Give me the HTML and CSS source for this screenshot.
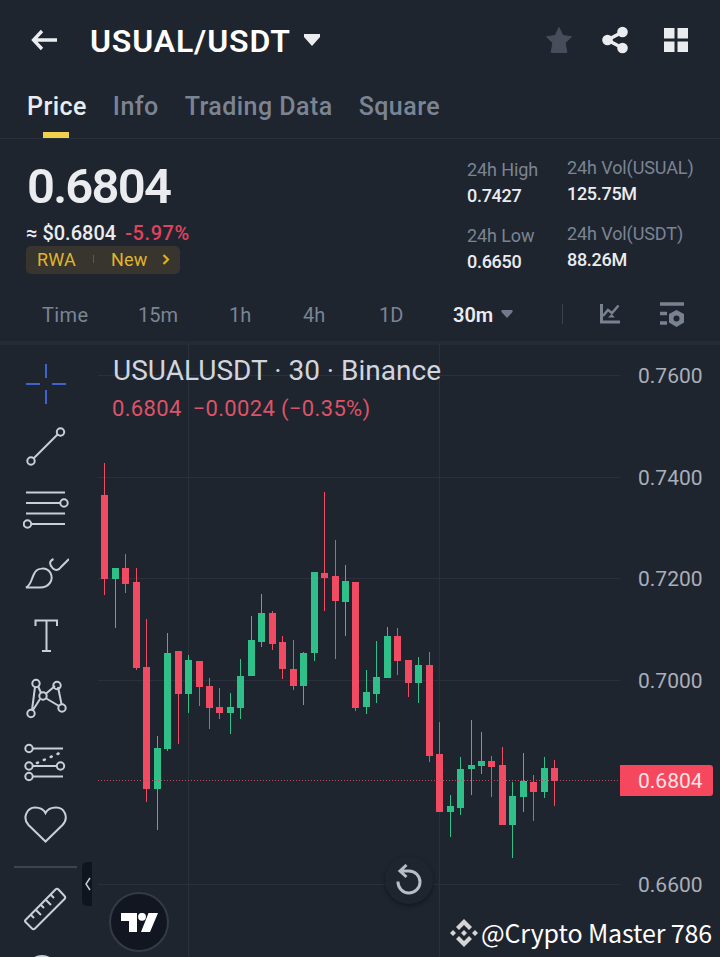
FILE: index.html
```html
<!DOCTYPE html>
<html lang="en">
<head>
    <meta charset="UTF-8">
    <meta name="viewport" content="width=device-width, initial-scale=1.0">
    <title>USUAL/USDT</title>
    <link rel="stylesheet" href="styles.css">
</head>
<body>
    <header class="topbar">
        <svg class="back" width="28" height="22" viewBox="0 0 28 22"><path d="M12 2L3.500 11L12 20M3.500 11H27" fill="none" stroke="#eaecef" stroke-width="3.300"/></svg>
        <h1>USUAL/USDT</h1>
        <svg class="caret" width="18" height="14" viewBox="0 0 18 14"><path d="M1 1H17V4L9 13L1 4Z" fill="#eaecef"/></svg>
        <div class="actions">
            <svg width="28" height="28" viewBox="0 0 28 28"><path d="M14 1.500L17.800 9.600L26.500 10.700L20.200 17L21.800 26.500H6.200L7.800 17L1.500 10.700L10.200 9.600Z" fill="#474d5b" stroke="#474d5b" stroke-linejoin="round"/></svg>
            <svg width="28" height="28" viewBox="0 0 28 28"><path d="M21.500 6L6.500 14L21.500 22" fill="none" stroke="#eaecef" stroke-width="3.500"/><circle cx="21.500" cy="6" r="5.300" fill="#eaecef"/><circle cx="6.500" cy="14" r="5.300" fill="#eaecef"/><circle cx="21.500" cy="22" r="5.300" fill="#eaecef"/></svg>
            <svg width="28" height="28" viewBox="0 0 28 28"><path d="M2 2H12.500V12.500H2ZM15.500 2H26V12.500H15.500ZM2 15.500H12.500V26H2ZM15.500 15.500H26V26H15.500Z" fill="#eaecef"/></svg>
        </div>
    </header>

    <nav class="tabs">
        <a class="tab active">Price</a>
        <a class="tab">Info</a>
        <a class="tab">Trading Data</a>
        <a class="tab">Square</a>
    </nav>

    <section class="summary">
        <div class="quote">
            <div class="price">0.6804</div>
            <div class="fiat">≈ $0.6804 <span class="change">-5.97%</span></div>
            <div class="tags">
                <span>RWA</span>
                <i class="tag-line"></i>
                <span>New</span>
                <svg width="8" height="11" viewBox="0 0 8 11"><path d="M1.500 1L6 5.500L1.500 10" fill="none" stroke="#e0af1f" stroke-width="2.200"/></svg>
            </div>
        </div>
        <dl class="stats stats-left">
            <dt>24h High</dt>
            <dd>0.7427</dd>
            <dt>24h Low</dt>
            <dd>0.6650</dd>
        </dl>
        <dl class="stats stats-right">
            <dt>24h Vol(USUAL)</dt>
            <dd>125.75M</dd>
            <dt>24h Vol(USDT)</dt>
            <dd>88.26M</dd>
        </dl>
    </section>

    <nav class="intervals">
        <span class="int-time">Time</span>
        <span class="int-15">15m</span>
        <span class="int-1h">1h</span>
        <span class="int-4h">4h</span>
        <span class="int-1d">1D</span>
        <span class="selected">30m</span>
        <svg width="12" height="10" viewBox="0 0 12 10"><path d="M.5 1H11.500V3L6 9L.5 3Z" fill="#707a8a"/></svg>
        <i class="int-line"></i>
        <svg class="int-chart" width="20" height="20" viewBox="0 0 20 20"><path d="M1.500 0V18H20" fill="none" stroke="#788290" stroke-width="3"/><path d="M3 12L8 6L12 9L18.500 1.500" fill="none" stroke="#788290" stroke-width="2.500"/><path d="M8 13.500L11.500 10L15 13.500Z" fill="#788290"/></svg>
        <svg class="int-settings" width="26" height="26" viewBox="0 0 26 26"><path d="M1 3H25M1 12.500H8M1 22H8" stroke="#788290" stroke-width="3.600"/><path fill-rule="evenodd" d="M17.500 9L25 13V21.500L17.500 26L10 21.500V13ZM17.500 14.500A3 3 0 1 0 17.500 20.500A3 3 0 1 0 17.500 14.500Z" fill="#788290"/></svg>
    </nav>

    <main class="chart">
        <aside class="tools">
            <svg class="cross" viewBox="0 0 46 63"><path d="M23 12V26M23 38V52M3 32H17M29 32H43"/></svg>
            <svg viewBox="0 0 46 63"><path d="M10.500 43.500L34.500 19.500"/><circle cx="8" cy="46" r="3.700"/><circle cx="37.500" cy="17" r="3.700"/></svg>
            <svg viewBox="0 0 46 63"><path d="M3 14.500H42M3 25H37M3 35.500H42M8 46H42"/><circle cx="41" cy="25" r="3.700"/><circle cx="4.500" cy="46" r="3.700"/></svg>
            <svg viewBox="0 0 46 63"><path d="M3 46.500C8 44 8 39 11 33C14 26 24 26 27.500 32C31 39 26 46.500 17 46.500Z"/><path d="M30.500 18C26 20 26 24 30 27.500C33 30 36 29 38 26L46 18"/></svg>
            <svg viewBox="0 0 46 63"><path d="M12.500 22V16.500H34V22M23.500 16.500V47M19 47H28"/></svg>
            <svg viewBox="0 0 46 63"><path d="M12 20L9 43M15 19L18 26M22.500 27L32 19M35 20L38.500 37M22.500 31L36 39M17 32L10 43"/><circle cx="13" cy="16.500" r="3.700"/><circle cx="34" cy="18.500" r="3.700"/><circle cx="20" cy="29" r="3.700"/><circle cx="39" cy="41" r="3.700"/><circle cx="8" cy="46.500" r="3.700"/></svg>
            <svg viewBox="0 0 46 63"><path d="M10 18.500H40M10 36H34M10 46.500H40"/><path class="dots" d="M14 33L39 22"/><circle cx="6" cy="18.500" r="3.700"/><circle cx="6" cy="36" r="3.700"/><circle cx="37.500" cy="36" r="3.700"/><circle cx="6" cy="46.500" r="3.700"/></svg>
            <svg viewBox="0 0 46 63"><path d="M22.500 48.500L5.500 32C-1 25 4 14.500 12 14.500C17 14.500 21 17 22.500 20C24 17 28 14.500 33 14.500C42 14.500 46 25 39.500 32Z"/></svg>
            <i class="tools-line"></i>
            <svg class="ruler" viewBox="0 0 46 46"><path d="M3.500 34L33.500 3.500Q35 2 36.500 3.500L42.500 10Q44 11.500 42.500 13L13 42.500Q11.500 44 10 42.500L3.500 36Q2.500 35 3.500 34ZM9 29L12 32M14 24L19 29M19 19L22 22M24 14L29 19M29 9L32 12"/></svg>
            <svg class="zoom-tool" viewBox="0 0 46 46"><circle cx="20" cy="17" r="15"/></svg>
        </aside>
        <div class="plot">
            <svg width="622" height="614" viewBox="98 343 622 614">
                <g class="grid">
                    <path d="M98 375.500H620M98 477.500H620M98 578.500H620M98 680.500H620M98 884.500H620M188.500 343V957M439.500 343V957"/>
                </g>
                <g id="series"></g>
                <path class="last-line" d="M98 780.500H620"/>
                <g class="scale">
                    <text x="638" y="383">0.7600</text>
                    <text x="638" y="485">0.7400</text>
                    <text x="638" y="586">0.7200</text>
                    <text x="638" y="688">0.7000</text>
                    <text x="638" y="892">0.6600</text>
                    <path class="last-box" d="M620 765H710Q713 765 713 768V793Q713 796 710 796H620Z"/>
                    <text class="last" x="638" y="788">0.6804</text>
                </g>
            </svg>
            <div class="legend">
                <div class="legend-title">USUALUSDT · 30 · Binance</div>
                <div class="legend-values">0.6804 <span>−0.0024 (−0.35%)</span></div>
            </div>
            <div class="collapse"><svg width="8" height="14" viewBox="0 0 8 14"><path d="M7 1L3 7L7 13" fill="none" stroke="#c5cbd8" stroke-width="1.500"/></svg></div>
            <div class="tv-logo"><svg width="38" height="20" viewBox="0 0 38 20"><path d="M0 0H16V19H8V8H0ZM27.500 0H37L29 19H20Z" fill="#fff"/><circle cx="21" cy="3.800" r="3.900" fill="#fff"/></svg></div>
            <div class="reset"><svg width="28" height="32" viewBox="0 0 28 32"><path d="M3 17.500A11 11 0 1 0 14 7H5M11.500 1L5 7L11.500 13" fill="none" stroke="#b8bdc9" stroke-width="3"/></svg></div>
            <div class="watermark">
                <svg width="28" height="28" viewBox="0 0 28 28"><path d="M14 0L22 8L19 11L14 6L9 11L6 8ZM3 11L6 14L3 17L0 14ZM25 11L28 14L25 17L22 14ZM14 11L17 14L14 17L11 14ZM9 17L14 22L19 17L22 20L14 28L6 20Z" fill="#d5d5d5"/></svg>
                <span>@Crypto Master 786</span>
            </div>
        </div>
    </main>
    <script src="chart.js"></script>
</body>
</html>
```
FILE: styles.css
```css
body {
    margin: 0;
    width: 720px;
    height: 957px;
    overflow: hidden;
    background-color: #1f252f;
    color: #eaecef;
    font-family: Roboto, "Liberation Sans", sans-serif;
}
svg {
    display: block;
    flex: none;
}
.topbar {
    display: flex;
    align-items: center;
    height: 80px;
    padding: 0 30px;
}
h1 {
    margin: 2px 0 0 32px;
    width: 199px;
    font-size: 32px;
    font-weight: 600;
    letter-spacing: 0.85px;
    white-space: nowrap;
    color: #fff;
}
.caret {
    margin-left: 14px;
}
.actions {
    display: flex;
    gap: 30px;
    margin-left: auto;
}
.actions svg:nth-child(2) {
    margin-left: -2px;
    margin-right: 3px;
}
.tabs {
    display: flex;
    box-sizing: border-box;
    height: 59px;
    padding-left: 27px;
    border-bottom: 1px solid #2b313b;
}
.tab {
    position: relative;
    margin-right: 26px;
    padding-top: 11px;
    font-size: 25px;
    line-height: 31px;
    font-weight: 500;
    letter-spacing: 0.45px;
    white-space: nowrap;
    color: #7b8493;
}
.active {
    color: #eaecef;
}
.active::after {
    content: "";
    position: absolute;
    left: 16px;
    bottom: 0;
    width: 26px;
    height: 6px;
    background-color: #f0d04c;
}
.summary {
    display: flex;
    height: 147px;
}
.quote {
    flex: none;
    box-sizing: border-box;
    width: 467px;
    padding-left: 27px;
}
.price {
    margin-top: 20px;
    height: 56px;
    line-height: 56px;
    font-size: 49px;
    font-weight: 600;
    letter-spacing: -1.8px;
}
.fiat {
    margin: 6px 0 1px -1px;
    height: 24px;
    line-height: 24px;
    font-size: 20px;
    font-weight: 500;
}
.change {
    margin-left: 4px;
    letter-spacing: 0.6px;
    color: #e0435d;
}
.tags {
    display: flex;
    align-items: center;
    box-sizing: border-box;
    width: 154px;
    height: 28px;
    margin-left: -1px;
    padding: 0 10px 2px 11px;
    border-radius: 5px;
    background-color: #37352d;
    font-size: 18px;
    letter-spacing: 0.2px;
    color: #e0b42e;
}
.tag-line {
    width: 1px;
    height: 8px;
    margin: 0 17px;
    background-color: #6b5a2a;
}
.tags svg {
    margin-left: auto;
}
.stats {
    margin: 0;
    font-size: 18px;
    letter-spacing: -0.1px;
}
.stats-left {
    width: 100px;
    padding-top: 18px;
}
.stats-right {
    padding-top: 16px;
}
.stats dt {
    height: 26px;
    line-height: 26px;
    white-space: nowrap;
    color: #7b8493;
}
.stats dd {
    height: 26px;
    line-height: 26px;
    margin: 0 0 14px;
    font-weight: 500;
    letter-spacing: -0.3px;
}
.intervals {
    display: flex;
    align-items: center;
    box-sizing: border-box;
    height: 59px;
    padding-left: 42px;
    border-bottom: 4px solid #252b35;
    font-size: 20px;
    color: #7b8493;
}
.intervals span {
    flex: none;
    padding-top: 3px;
}
.int-time {
    width: 96px;
    letter-spacing: 0.4px;
}
.int-15 {
    width: 91px;
}
.int-1h {
    width: 74px;
}
.int-4h {
    width: 76px;
}
.int-1d {
    width: 74px;
}
.selected {
    width: 48px;
    font-weight: 600;
    color: #eaecef;
}
.int-line {
    width: 1px;
    height: 20px;
    margin-left: 49px;
    background-color: #3a414d;
}
.int-chart {
    margin-left: 37px;
}
.int-settings {
    margin-left: 39px;
}
.chart {
    display: flex;
    height: 612px;
}
.tools {
    display: flex;
    flex-direction: column;
    width: 98px;
}
.tools svg {
    width: 46px;
    height: 63px;
    margin-left: 23px;
    fill: none;
    stroke: #c9cfda;
    stroke-width: 2;
}
.tools .cross {
    margin-top: 7px;
    stroke: #3f63c8;
}
.tools .dots {
    stroke-width: 2.6;
    stroke-linecap: round;
    stroke-dasharray: 1 6.500;
}
.tools-line {
    flex: none;
    width: 63px;
    height: 2px;
    margin: 10px 0 18px 14px;
    background-color: #3e444f;
}
.tools .ruler,
.tools .zoom-tool {
    height: 46px;
    margin-left: 22px;
}
.tools .zoom-tool {
    margin-top: 22px;
}
.plot {
    position: relative;
    margin-top: -2px;
}
.grid path {
    fill: none;
    stroke: #2a313b;
}
.last-line {
    stroke: #c04a60;
    stroke-dasharray: 1 2;
}
.up {
    fill: #2fbf89;
}
.down {
    fill: #f04b63;
}
.scale text {
    font-size: 21px;
    fill: #a9afba;
}
.scale .last-box {
    fill: #f5475d;
}
.scale .last {
    fill: #fce3e6;
}
.legend {
    position: absolute;
    left: 15px;
    top: 10px;
    white-space: nowrap;
}
.legend-title {
    font-size: 28px;
    line-height: 36px;
    color: #d1d5de;
}
.legend-values {
    margin: 6px 0 0 -1px;
    font-size: 22px;
    line-height: 28px;
    letter-spacing: 0.35px;
    color: #dc5368;
}
.legend-values span {
    margin-left: 5px;
}
.collapse {
    position: absolute;
    left: -16px;
    top: 519px;
    display: flex;
    align-items: center;
    justify-content: center;
    width: 10px;
    height: 44px;
    border-radius: 5px 0 0 5px;
    background-color: #10141e;
}
.tv-logo {
    position: absolute;
    left: 11px;
    top: 549px;
    display: flex;
    align-items: center;
    justify-content: center;
    width: 56px;
    height: 56px;
    border: 2px solid #343a46;
    border-radius: 50%;
    background-color: #121621;
}
.tv-logo svg {
    margin: 2px 0 0 2px;
}
.reset {
    position: absolute;
    left: 287px;
    top: 513px;
    display: flex;
    align-items: center;
    justify-content: center;
    width: 48px;
    height: 48px;
    border-radius: 50%;
    background-color: #1f252f;
    box-shadow: 0 2px 5px rgba(0, 0, 0, 0.4);
}
.watermark {
    position: absolute;
    left: 352px;
    top: 573px;
    display: flex;
    align-items: center;
    gap: 3px;
    height: 34px;
    font-family: "Noto Sans CJK SC", sans-serif;
    font-size: 25px;
    letter-spacing: -0.12px;
    white-space: nowrap;
    color: #fff;
}
.watermark span {
    padding-bottom: 3px;
}
```
FILE: chart.js
```js
// x, high, low, body top, body bottom, direction
const candles = [
    [101, 463, 595, 495, 579, 'down'],
    [112, 568, 628, 568, 579, 'up'],
    [122, 554, 593, 568, 584, 'down'],
    [133, 568, 670, 582, 668, 'down'],
    [143, 619, 802, 667, 789, 'down'],
    [154, 736, 830, 748, 789, 'up'],
    [164, 633, 751, 653, 749, 'up'],
    [175, 651, 744, 651, 694, 'down'],
    [185, 655, 713, 660, 694, 'up'],
    [196, 661, 706, 661, 687, 'down'],
    [206, 678, 729, 686, 708, 'down'],
    [216, 688, 719, 707, 713, 'down'],
    [227, 693, 734, 707, 713, 'up'],
    [237, 659, 719, 676, 708, 'up'],
    [248, 616, 676, 640, 676, 'up'],
    [258, 594, 647, 613, 642, 'up'],
    [269, 611, 650, 613, 644, 'down'],
    [279, 636, 679, 642, 669, 'down'],
    [290, 640, 690, 669, 686, 'down'],
    [300, 652, 705, 653, 686, 'up'],
    [311, 572, 661, 572, 653, 'up'],
    [321, 492, 611, 573, 578, 'down'],
    [332, 540, 659, 576, 601, 'down'],
    [342, 565, 636, 581, 602, 'up'],
    [352, 582, 711, 582, 708, 'down'],
    [363, 670, 714, 692, 707, 'up'],
    [373, 641, 703, 677, 694, 'up'],
    [384, 627, 678, 636, 678, 'up'],
    [394, 628, 675, 636, 661, 'down'],
    [405, 660, 697, 660, 683, 'down'],
    [415, 657, 703, 665, 683, 'up'],
    [426, 652, 762, 665, 756, 'down'],
    [436, 722, 812, 754, 812, 'down'],
    [447, 795, 837, 806, 812, 'up'],
    [457, 757, 815, 769, 808, 'up'],
    [468, 720, 795, 765, 769, 'up'],
    [478, 732, 774, 761, 766, 'up'],
    [488, 756, 797, 761, 767, 'down'],
    [499, 747, 825, 765, 825, 'down'],
    [509, 782, 858, 796, 825, 'up'],
    [520, 753, 812, 781, 797, 'up'],
    [530, 775, 821, 782, 792, 'down'],
    [541, 757, 798, 768, 792, 'up'],
    [551, 760, 806, 768, 781, 'down']
];

const series = document.getElementById('series');

function addRect(x, y, width, height, name) {
    const rect = document.createElementNS('http://www.w3.org/2000/svg', 'rect');
    rect.setAttribute('x', x);
    rect.setAttribute('y', y);
    rect.setAttribute('width', width);
    rect.setAttribute('height', height);
    rect.setAttribute('class', name);
    series.appendChild(rect);
}

candles.forEach(([x, high, low, top, bottom, name]) => {
    addRect(x + 3, high, 1, low - high, name);
    addRect(x, top, 7, bottom - top, name);
});
```
